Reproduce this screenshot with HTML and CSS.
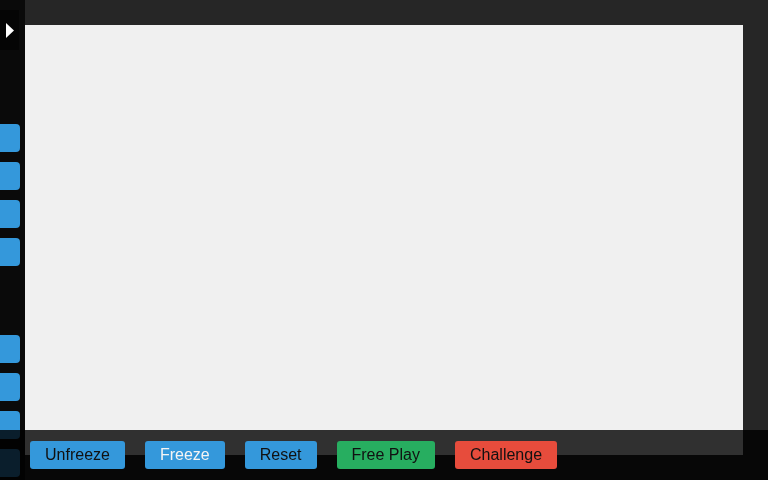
FILE: index.html
```html
<!DOCTYPE html>
<html lang="en">
<head>
<meta charset="utf-8">
<title>Physics Playground</title>
<link rel="stylesheet" href="styles.css">
</head>
<body>
<div class="app">
  <aside class="sidebar">
    <button class="toggle" aria-label="Open panel">
      <svg width="8" height="15" viewBox="0 0 8 15"><polygon points="0,0 8,7.5 0,15" fill="#ffffff"/></svg>
    </button>
    <div class="group group-top">
      <button class="side-btn"></button>
      <button class="side-btn"></button>
      <button class="side-btn"></button>
      <button class="side-btn"></button>
    </div>
    <div class="group group-bottom">
      <button class="side-btn"></button>
      <button class="side-btn"></button>
      <button class="side-btn"></button>
      <button class="side-btn"></button>
    </div>
  </aside>
  <main class="stage">
    <div class="canvas"></div>
  </main>
</div>
<div class="toolbar">
  <button class="tool blue">Unfreeze</button>
  <button class="tool blue light">Freeze</button>
  <button class="tool blue">Reset</button>
  <button class="tool green">Free Play</button>
  <button class="tool red">Challenge</button>
</div>
</body>
</html>
```

FILE: styles.css
```css
html, body {
  margin: 0;
  padding: 0;
  height: 100%;
  overflow: hidden;
}
body {
  background: #262626;
  font-family: "Liberation Sans", Arial, sans-serif;
}
.app {
  display: flex;
  height: 100vh;
}
.sidebar {
  width: 25px;
  flex: 0 0 25px;
  background: #0a0a0a;
  display: flex;
  flex-direction: column;
}
.toggle {
  margin-top: 10px;
  width: 19px;
  height: 40px;
  padding: 0 0 0 6px;
  border: none;
  background: #050505;
  display: flex;
  align-items: center;
  justify-content: flex-start;
}
.group {
  display: flex;
  flex-direction: column;
  gap: 10px;
}
.group-top { margin-top: 74px; }
.group-bottom { margin-top: 69px; }
.side-btn {
  width: 20px;
  height: 28px;
  border: none;
  padding: 0;
  background: #3498db;
  border-radius: 0 4px 4px 0;
}
.stage {
  padding-top: 25px;
}
.canvas {
  width: 718px;
  height: 430px;
  background: #f0f0f0;
}
.toolbar {
  position: fixed;
  left: 0;
  right: 0;
  bottom: 0;
  height: 50px;
  background: rgba(0, 0, 0, 0.8);
  display: flex;
  align-items: center;
  gap: 20px;
  padding: 0 30px;
  box-sizing: border-box;
}
.tool {
  height: 28px;
  padding: 0 15px;
  border: none;
  border-radius: 3px;
  font-family: "Liberation Sans", Arial, sans-serif;
  font-size: 16px;
  color: #111;
  line-height: 28px;
}
.tool.blue { background: #3498db; }
.tool.green { background: #27ae60; }
.tool.red { background: #e74c3c; }
.tool.light { color: #f4f4f4; }
```
